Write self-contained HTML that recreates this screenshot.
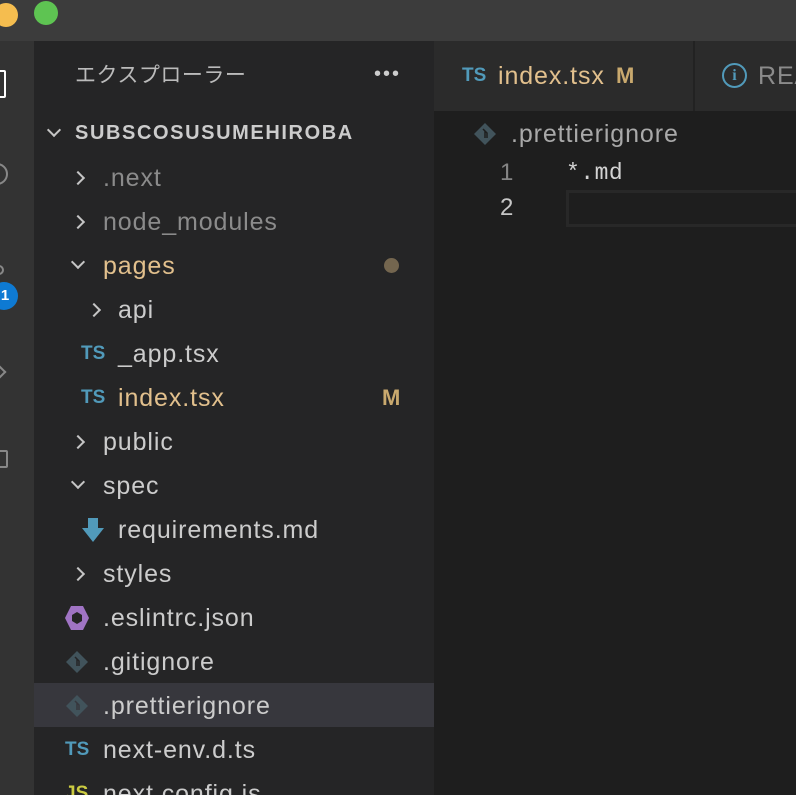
<!DOCTYPE html>
<html><head><meta charset="utf-8"><style>
*{margin:0;padding:0;box-sizing:border-box}
html,body{width:796px;height:795px;overflow:hidden}
body{background:#1e1e1e;font-family:"Liberation Sans","Noto Sans CJK JP",sans-serif}
#w{position:relative;width:796px;height:795px;overflow:hidden}
.a{position:absolute;white-space:nowrap}
.t{font-size:25px;color:#cccccc;line-height:44px;letter-spacing:0.9px}
.chev{position:absolute;width:10px;height:10px;border-right:2px solid #c5c5c5;border-bottom:2px solid #c5c5c5}
.r{transform:rotate(-45deg)}
.d{transform:rotate(45deg)}
.ts{font-size:19px;font-weight:bold;color:#519aba;line-height:44px}
</style></head><body><div id="w">
<div class="a" style="left:0;top:0;width:796px;height:41px;background:#3c3c3c"></div>
<div class="a" style="left:-6px;top:3px;width:24px;height:24px;border-radius:50%;background:#f5bd4f"></div>
<div class="a" style="left:34px;top:1px;width:24px;height:24px;border-radius:50%;background:#5ec452"></div>
<div class="a" style="left:0;top:41px;width:34px;height:754px;background:#333333"></div>
<div class="a" style="left:-6px;top:70px;width:12px;height:28px;border:2px solid #fff;border-radius:2px"></div>
<div class="a" style="left:-14px;top:163px;width:22px;height:22px;border:2px solid #888;border-radius:50%"></div>
<div class="a" style="left:-6px;top:265px;width:10px;height:10px;border:2px solid #888;border-radius:50%"></div>
<div class="a" style="left:-10px;top:282px;width:28px;height:28px;border-radius:50%;background:#0e7ad3;color:#fff;font-size:15px;font-weight:bold;line-height:28px;text-align:center;padding-left:2px">1</div>
<div class="a" style="left:-8px;top:366px;width:12px;height:12px;border-right:2px solid #888;border-bottom:2px solid #888;transform:rotate(-45deg)"></div>
<div class="a" style="left:-4px;top:450px;width:12px;height:18px;border:2px solid #888;border-radius:2px"></div>
<div class="a" style="left:34px;top:41px;width:400px;height:754px;background:#252526"></div>
<div class="a" style="left:34px;top:683px;width:400px;height:44px;background:#37373d"></div>
<div class="a t" style="left:75px;top:54px;font-size:21px;color:#bbbbbb;letter-spacing:0.5px">エクスプローラー</div>
<div class="a t" style="left:374px;top:52px;font-size:20px;color:#ccc;letter-spacing:2px">•••</div>
<div class="chev d" style="left:49px;top:125px"></div>
<div class="a t" style="left:75px;top:111px;font-size:20px;font-weight:bold;color:#cccccc;letter-spacing:1.6px">SUBSCOSUSUMEHIROBA</div>
<div class="chev r" style="left:73px;top:173px"></div>
<div class="a t" style="left:103px;top:156px;color:#8b8b8b">.next</div>
<div class="chev r" style="left:73px;top:217px"></div>
<div class="a t" style="left:103px;top:200px;color:#8b8b8b">node_modules</div>
<div class="chev d" style="left:73px;top:257px"></div>
<div class="a t" style="left:103px;top:244px;color:#e2c08d">pages</div>
<div class="a" style="left:384px;top:258px;width:15px;height:15px;border-radius:50%;background:#74664f"></div>
<div class="chev r" style="left:89px;top:305px"></div>
<div class="a t" style="left:118px;top:288px">api</div>
<div class="a ts" style="left:81px;top:332px">TS</div>
<div class="a t" style="left:118px;top:332px">_app.tsx</div>
<div class="a ts" style="left:81px;top:376px">TS</div>
<div class="a t" style="left:118px;top:376px;color:#e2c08d">index.tsx</div>
<div class="a t" style="left:382px;top:376px;color:#c9a96e;font-weight:bold;font-size:22px">M</div>
<div class="chev r" style="left:73px;top:437px"></div>
<div class="a t" style="left:103px;top:420px">public</div>
<div class="chev d" style="left:73px;top:477px"></div>
<div class="a t" style="left:103px;top:464px">spec</div>
<svg class="a" style="left:82px;top:518px" width="22" height="24" viewBox="0 0 22 24"><path d="M6 0h10v10h6L11 24 0 10h6z" fill="#519aba"/></svg>
<div class="a t" style="left:118px;top:508px">requirements.md</div>
<div class="chev r" style="left:73px;top:569px"></div>
<div class="a t" style="left:103px;top:552px">styles</div>
<svg class="a" style="left:64px;top:605px" width="26" height="26" viewBox="0 0 26 26"><path d="M7 1h12l6 12-6 12H7L1 13z" fill="#a074c4"/><path d="M13 7l5 3v6l-5 3-5-3v-6z" fill="#252526"/></svg>
<div class="a t" style="left:103px;top:596px">.eslintrc.json</div>
<svg class="a" style="left:66px;top:651px" width="22" height="22" viewBox="0 0 22 22"><path d="M11 0l11 11-11 11L0 11z" fill="#41535b"/><path d="M9 6l4 4v5M11 8v7" stroke="#252526" stroke-width="1.5" fill="none"/></svg>
<div class="a t" style="left:103px;top:640px">.gitignore</div>
<svg class="a" style="left:66px;top:695px" width="22" height="22" viewBox="0 0 22 22"><path d="M11 0l11 11-11 11L0 11z" fill="#41535b"/><path d="M9 6l4 4v5M11 8v7" stroke="#37373d" stroke-width="1.5" fill="none"/></svg>
<div class="a t" style="left:103px;top:684px">.prettierignore</div>
<div class="a ts" style="left:65px;top:728px">TS</div>
<div class="a t" style="left:103px;top:728px">next-env.d.ts</div>
<div class="a ts" style="left:65px;top:772px;color:#cbcb41">JS</div>
<div class="a t" style="left:103px;top:772px">next.config.js</div>
<div class="a" style="left:434px;top:41px;width:362px;height:70px;background:#2b2b2b"></div>
<div class="a" style="left:693px;top:41px;width:2px;height:70px;background:#222"></div>
<div class="a ts" style="left:462px;top:54px">TS</div>
<div class="a t" style="left:498px;top:54px;color:#e2c08d">index.tsx</div>
<div class="a t" style="left:616px;top:54px;color:#c9a96e;font-weight:bold;font-size:22px">M</div>
<div class="a" style="left:722px;top:63px;width:25px;height:25px;border:2px solid #519aba;border-radius:50%;color:#519aba;font-size:16px;font-weight:bold;text-align:center;line-height:21px;font-family:'Liberation Serif',serif">i</div>
<div class="a t" style="left:758px;top:54px;color:#8b8b8b;width:38px;overflow:hidden">READ</div>
<svg class="a" style="left:474px;top:123px" width="22" height="22" viewBox="0 0 22 22"><path d="M11 0l11 11-11 11L0 11z" fill="#41535b"/><path d="M9 6l4 4v5M11 8v7" stroke="#1e1e1e" stroke-width="1.5" fill="none"/></svg>
<div class="a t" style="left:511px;top:112px;color:#a9a9a9">.prettierignore</div>
<div class="a t" style="left:500px;top:151px;font-size:24px;color:#858585">1</div>
<div class="a t" style="left:500px;top:186px;font-size:24px;color:#c6c6c6">2</div>
<div class="a t" style="left:566px;top:151px;font-family:'Liberation Mono',monospace;font-size:23px;letter-spacing:0.5px;color:#d4d4d4">*.md</div>
<div class="a" style="left:566px;top:190px;width:230px;height:37px;border:3px solid #282828;border-right:none"></div>
</div></body></html>
